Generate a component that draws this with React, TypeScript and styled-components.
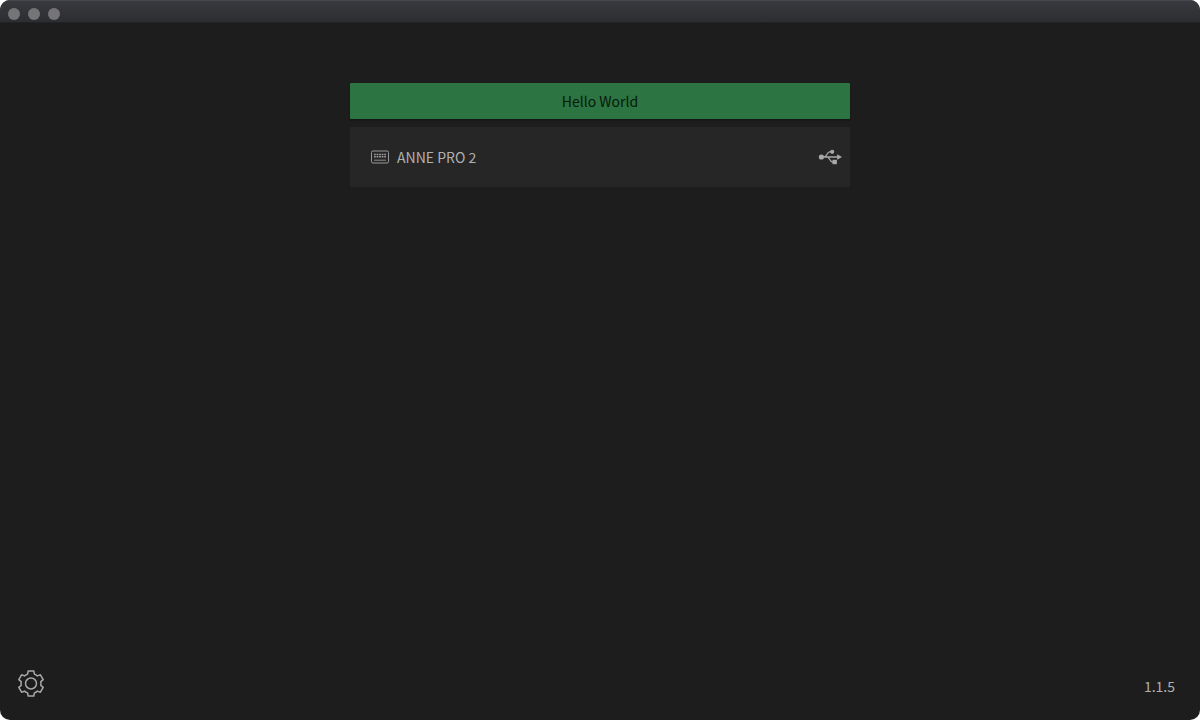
import React from "react";
import styled, { createGlobalStyle } from "styled-components";

const GlobalStyle = createGlobalStyle`
  * { box-sizing: border-box; }
  body {
    margin: 0;
    background: #ffffff;
    font-family: "Noto Sans CJK SC", sans-serif;
    font-size: 14px;
    line-height: 20px;
    color: #b0b0b0;
  }
`;

const Window = styled.div`
  display: flex;
  flex-direction: column;
  min-height: 100vh;
  border-radius: 10px;
  overflow: hidden;
  background: #1d1d1d;
`;

const TitleBar = styled.header`
  display: flex;
  align-items: center;
  gap: 8px;
  height: 23px;
  padding: 5px 8px 0;
  background: linear-gradient(#38393e, #2d2e32);
  border-top: 1px solid #46474b;
  border-bottom: 1px solid #222224;
`;

const WindowButton = styled.button`
  width: 12px;
  height: 12px;
  padding: 0;
  border: 0;
  border-radius: 50%;
  background: #757578;
`;

const Content = styled.main`
  flex: 1;
  display: flex;
  flex-direction: column;
  gap: 8px;
  width: 100%;
  max-width: 500px;
  margin: 0 auto;
  padding-top: 60px;
`;

const HelloButton = styled.button`
  height: 36px;
  padding: 0;
  border: 0;
  border-radius: 1px;
  background: #2c7441;
  color: #06190b;
  font: inherit;
  box-shadow: 0 1px 2px rgba(0, 0, 0, 0.3);
`;

const DeviceButton = styled.button`
  display: flex;
  align-items: center;
  gap: 8px;
  height: 60px;
  padding: 0 8px 0 21px;
  border: 0;
  border-radius: 1px;
  background: #262626;
  color: inherit;
  font: inherit;
  text-align: left;
`;

const DeviceName = styled.span`
  flex: 1;
`;

const Footer = styled.footer`
  display: flex;
  align-items: center;
  justify-content: space-between;
  padding: 0 25px 22px 17px;
`;

const SettingsButton = styled.button`
  display: flex;
  padding: 0;
  border: 0;
  background: none;
  color: inherit;
`;

const Version = styled.span`
  padding-top: 4px;
`;

const KeyboardIcon = () => (
  <svg width="18" height="14" viewBox="0 0 18 14" fill="none" stroke="#989898" aria-hidden="true">
    <rect x="0.5" y="1" width="17" height="12" rx="1.5" />
    <path d="M3 4.5H15M3 6.8H15" strokeWidth="1.6" strokeDasharray="1.8 0.75" />
    <path d="M3 10.2H15" strokeWidth="0.9" />
  </svg>
);

const UsbIcon = () => (
  <svg width="24" height="16" viewBox="0 0 24 16" fill="none" stroke="#a8a8a8" aria-hidden="true">
    <path
      d="M3 8H20M6 8C9 8 9 2.8 11.5 2.8H13M9 8C12 8 11.5 13 14.5 13H16"
      strokeWidth="1.3"
    />
    <g fill="#a8a8a8" stroke="none">
      <circle cx="3.4" cy="8" r="2.6" />
      <circle cx="14.2" cy="2.8" r="2.1" />
      <rect x="14.5" y="10.8" width="4.4" height="4.4" />
      <path d="M19.2 5.2L24 8L19.2 10.8Z" />
    </g>
  </svg>
);

const GearIcon = () => (
  <svg
    width="28"
    height="28"
    viewBox="-14 -13.5 28 28"
    fill="none"
    stroke="#a8a8a8"
    strokeWidth="1.5"
    strokeLinejoin="round"
    aria-hidden="true"
  >
    <path
      d="M-2.8 -12.5H2.8L3.4 -9.4Q5 -8.8 6.4 -7.6L9.4 -8.7L12.2 -3.8L9.8 -1.8Q10.1 0 9.8 1.8L12.2 3.8L9.4 8.7L6.4 7.6Q5 8.8 3.4 9.4L2.8 12.5H-2.8L-3.4 9.4Q-5 8.8 -6.4 7.6L-9.4 8.7L-12.2 3.8L-9.8 1.8Q-10.1 0 -9.8 -1.8L-12.2 -3.8L-9.4 -8.7L-6.4 -7.6Q-5 -8.8 -3.4 -9.4Z"
    />
    <circle r="5.5" />
  </svg>
);

export default function App() {
  return (
    <>
      <GlobalStyle />
      <Window>
        <TitleBar>
          <WindowButton type="button" aria-label="Close" />
          <WindowButton type="button" aria-label="Minimize" />
          <WindowButton type="button" aria-label="Zoom" />
        </TitleBar>
        <Content>
          <HelloButton type="button">Hello World</HelloButton>
          <DeviceButton type="button">
            <KeyboardIcon />
            <DeviceName>ANNE PRO 2</DeviceName>
            <UsbIcon />
          </DeviceButton>
        </Content>
        <Footer>
          <SettingsButton type="button" aria-label="Settings">
            <GearIcon />
          </SettingsButton>
          <Version>1.1.5</Version>
        </Footer>
      </Window>
    </>
  );
}
